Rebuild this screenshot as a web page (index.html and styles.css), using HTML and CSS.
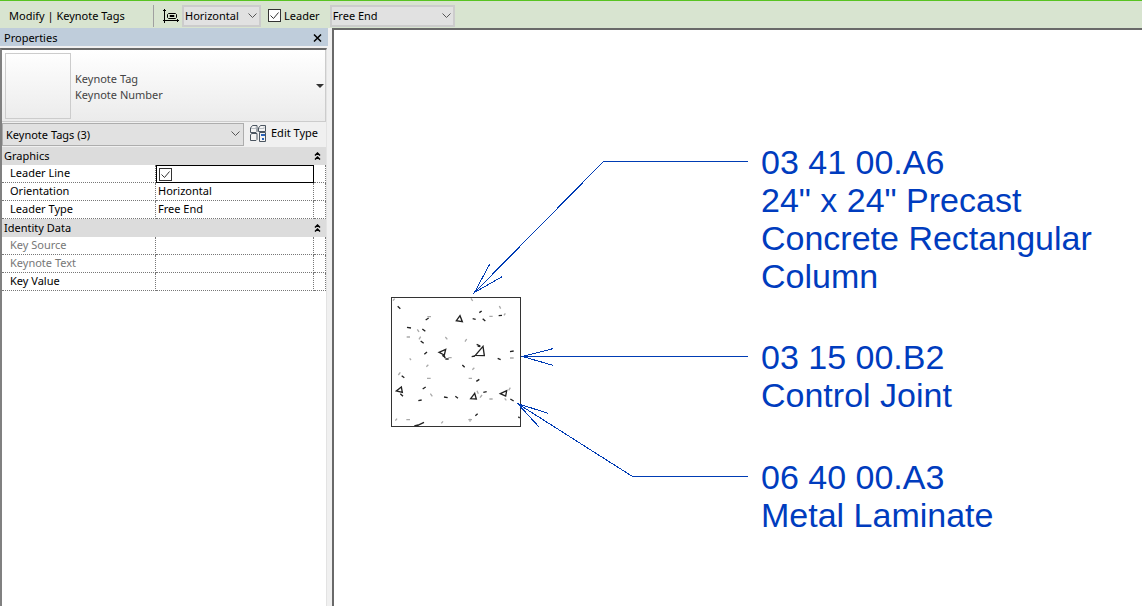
FILE: index.html
```
<!DOCTYPE html>
<html lang="en">
<head>
    <meta charset="UTF-8">
    <meta name="viewport" content="width=device-width, initial-scale=1.0">
    <title>Modify | Keynote Tags</title>
    <link rel="stylesheet" href="styles.css">
</head>
<body>

    <!-- Options Bar -->
    <header class="options-bar">
        <h1 class="mode">Modify | Keynote Tags</h1>
        <div class="options">
            <svg class="tag-icon" width="16" height="14" viewBox="0 0 16 14" aria-hidden="true">
                <path d="M1.5 0v14M0 11.500h16M0 1.500h3M14.500 10v3" />
                <path d="M5.500 4.500h7l1 1v3l-1 1h-7l-1-1v-3zM7 6.500h4v1H7z" />
            </svg>
            <div class="select-box orientation">
                <select aria-label="Orientation">
                    <option>Horizontal</option>
                    <option>Vertical</option>
                </select>
                <svg class="arrow" width="9" height="6" viewBox="0 0 9 6" aria-hidden="true"><path d="M0.500 0.500l4 4 4-4" /></svg>
            </div>
            <div class="check">
                <input type="checkbox" id="leader" checked>
                <svg width="9" height="8" viewBox="0 0 9 8" aria-hidden="true"><path d="M0.500 3.500l3 3 5-6" /></svg>
            </div>
            <label for="leader">Leader</label>
            <div class="select-box leader-end">
                <select aria-label="Leader end">
                    <option>Free End</option>
                    <option>Attached End</option>
                </select>
                <svg class="arrow" width="9" height="6" viewBox="0 0 9 6" aria-hidden="true"><path d="M0.500 0.500l4 4 4-4" /></svg>
            </div>
        </div>
    </header>

    <main class="workspace">

        <!-- Properties Palette -->
        <aside class="palette">
            <div class="palette-title">
                <h2>Properties</h2>
                <button type="button" aria-label="Close">
                    <svg width="9" height="8" viewBox="0 0 9 8"><path d="M1 0.500l7 7M8 0.500l-7 7" /></svg>
                </button>
            </div>

            <div class="palette-body">
                <button type="button" class="type-selector">
                    <span class="preview"></span>
                    <span class="type-name">Keynote Tag<br>Keynote Number</span>
                    <svg width="8" height="4" viewBox="0 0 8 4" aria-hidden="true"><path d="M0 0h8l-4 4z" /></svg>
                </button>

                <div class="filter">
                    <div class="select-box category">
                        <select aria-label="Category">
                            <option>Keynote Tags (3)</option>
                        </select>
                        <svg class="arrow" width="9" height="6" viewBox="0 0 9 6" aria-hidden="true"><path d="M0.500 0.500l4 4 4-4" /></svg>
                    </div>
                    <button type="button" class="edit-type">
                        <svg width="17" height="17" viewBox="0 0 17 17" aria-hidden="true">
                            <path class="tile" d="M0.500 3l2-2.500h4.500v6l-1 1h-5.500zM8.500 3l2-2.500h5v6h-7zM0.500 10l1-1.500h5.500v6l-1 1h-5.500z" />
                            <path class="shade" d="M1 3.500h5v-2M9 3.500h5v-2" />
                            <path class="tile" d="M9.500 7.500h6v9h-6z" />
                            <path class="blue" d="M11 9h4v2h-4zM12 13h2v2h-2z" />
                        </svg>
                        Edit Type
                    </button>
                </div>

                <table class="properties">
                    <colgroup>
                        <col class="col-name">
                        <col>
                        <col class="col-link">
                    </colgroup>
                    <tbody>
                        <tr class="group">
                            <th colspan="2">Graphics</th>
                            <th><button type="button" aria-label="Collapse Graphics"><svg width="7" height="8" viewBox="0 0 7 8"><path d="M1 3.500l2.500-2.500 2.500 2.500M1 7.500l2.500-2.500 2.500 2.500" /></svg></button></th>
                        </tr>
                        <tr>
                            <td><label for="leader-line">Leader Line</label></td>
                            <td class="active">
                                <div class="check">
                                    <input type="checkbox" id="leader-line" checked>
                                    <svg width="9" height="8" viewBox="0 0 9 8" aria-hidden="true"><path d="M0.500 3.500l3 3 5-6" /></svg>
                                </div>
                            </td>
                            <td></td>
                        </tr>
                        <tr>
                            <td>Orientation</td>
                            <td>Horizontal</td>
                            <td></td>
                        </tr>
                        <tr>
                            <td>Leader Type</td>
                            <td>Free End</td>
                            <td></td>
                        </tr>
                    </tbody>
                    <tbody>
                        <tr class="group">
                            <th colspan="2">Identity Data</th>
                            <th><button type="button" aria-label="Collapse Identity Data"><svg width="7" height="8" viewBox="0 0 7 8"><path d="M1 3.500l2.500-2.500 2.500 2.500M1 7.500l2.500-2.500 2.500 2.500" /></svg></button></th>
                        </tr>
                        <tr class="readonly">
                            <td>Key Source</td>
                            <td></td>
                            <td></td>
                        </tr>
                        <tr class="readonly">
                            <td>Keynote Text</td>
                            <td></td>
                            <td></td>
                        </tr>
                        <tr>
                            <td>Key Value</td>
                            <td></td>
                            <td></td>
                        </tr>
                    </tbody>
                </table>
            </div>
        </aside>

        <!-- Drawing Area -->
        <section class="drawing">
            <svg class="geometry" width="420" height="460" viewBox="0 0 420 460" aria-hidden="true">
                <!-- Concrete column -->
                <svg x="51" y="260" width="142" height="141" viewBox="0 0 426 423">
                    <path class="grit light" d="M24 32l5-6M258 25l5 8M127 80h11M65 141h10M97 118l5 8M102 148l5-8M181 141l6 7M240 155l5-8M313 79h10M343 48l4 8M357 76l4-6M375 204h11M190 203h10M74 205l4 5M124 230l6-6M126 265h11M40 255l6-8M136 311l6 8M251 265h10M262 239l6-6M276 302l4 9M285 323l6-8M313 327h10M371 301l5-8M359 325l5 6M169 400l5-6M31 392l5-6M64 389h11M250 389h11M255 386v9" />
                    <path class="grit" d="M38 49l8 7M122 90l9-6M66 112l12 2M112 117l9 7M107 153l9 7M118 193l8-7M283 68l7-5M263 86l9 2M293 86l8 7M341 77l10-1M375 185l11-2M275 163l11 5M260 200l10-2M338 205l9 4M172 196l8 5M181 207h10M232 225l7 7M50 257l8 6M113 297l9-6M274 274l9-6M100 332l10-2M177 321l11 2M211 319l8 6M271 377l7-6M376 327l10 6M295 307l10-2M400 380l4 4M46 311l8 8M88 408l15-4 14-7M92 408l10 1" />
                    <path class="stone" d="M225 77l-11 15 18 3zM162 187l20-9-4 17zM175 196l6 8M294 169l-23 27 27 1zM278 168l8 2M49 291l-15 12 18 4zM269 310l-12 16 17 1zM346 311l19-9-3 16z" />
                    <path class="column" d="M19 23h387v387H19z" />
                </svg>
                <!-- Leaders -->
                <path class="leader-line" d="M414 131.500H269.500L140.500 262.500M155.500 234.500l-15 28 28-16" />
                <path class="leader-line" d="M414 326.500H188.500M219.500 318.500l-31 8 31 9" />
                <path class="leader-line" d="M414 446.500H298.500L183.500 373.500M214.500 383.500l-31-10 22 24" />
            </svg>
            <p class="keynote precast">03 41 00.A6<br>24" x 24" Precast<br>Concrete Rectangular<br>Column</p>
            <p class="keynote joint">03 15 00.B2<br>Control Joint</p>
            <p class="keynote laminate">06 40 00.A3<br>Metal Laminate</p>
        </section>
    </main>

</body>
</html>
```

FILE: styles.css
```
* {
    margin: 0;
    padding: 0;
    box-sizing: border-box;
}

body {
    display: flex;
    flex-direction: column;
    min-height: 100vh;
    font-family: "Noto Sans", "Open Sans", sans-serif;
    font-size: 11px;
    line-height: 16px;
    color: #000;
    background-color: #f0f0f0;
}

h1,
h2 {
    font-size: inherit;
    font-weight: normal;
}

button,
select {
    font: inherit;
    color: inherit;
    border: none;
    background: none;
}

svg {
    display: block;
    fill: none;
    stroke: #000;
}

/* Options Bar */
.options-bar {
    display: flex;
    align-items: center;
    height: 28px;
    padding-top: 2px;
    border-top: 1px solid #58c322;
    background-color: #d8e4d0;
}

.mode {
    width: 154px;
    padding: 3px 0 3px 9px;
    border-right: 1px solid #a0a0a0;
}

.options {
    display: flex;
    align-items: center;
    padding-left: 9px;
}

.tag-icon {
    margin-right: 3px;
}

.select-box {
    position: relative;
    display: flex;
}

.select-box select {
    width: 100%;
    height: 22px;
    padding-left: 1px;
    border: 2px solid #cccccc;
    background-color: #e1e1e1;
    appearance: none;
}

.arrow {
    position: absolute;
    top: 8px;
    right: 4px;
    stroke: #555;
    pointer-events: none;
}

.orientation {
    width: 79px;
    margin-right: 7px;
}

.leader-end {
    width: 125px;
    margin-left: 10px;
}

.check {
    position: relative;
    width: 13px;
    height: 13px;
}

.check input {
    display: block;
    width: 13px;
    height: 13px;
    border: 1px solid #333;
    background-color: #fff;
    appearance: none;
}

.check svg {
    position: absolute;
    top: 3px;
    left: 2px;
    stroke: #333;
    pointer-events: none;
}

.options label {
    padding-left: 3px;
}

/* Workspace */
.workspace {
    display: flex;
    flex: 1;
}

/* Properties Palette */
.palette {
    display: flex;
    flex-direction: column;
    width: 328px;
    flex-shrink: 0;
}

.palette-title {
    display: flex;
    justify-content: space-between;
    align-items: center;
    height: 18px;
    margin-bottom: 2px;
    padding: 2px 6px 0 4px;
    background-color: #bfcddb;
}

.palette-title svg {
    stroke-width: 1.5;
}

.palette-body {
    flex: 1;
    margin-right: 1px;
    border-top: 2px solid #696969;
    border-left: 2px solid #808080;
    border-right: 1px solid #e3e3e3;
    background-color: #fff;
}

.type-selector {
    display: flex;
    align-items: center;
    width: 100%;
    height: 72px;
    padding: 0 1px 0 3px;
    color: #444;
    text-align: left;
    border-right: 1px solid #ccc;
    border-bottom: 1px solid #ccc;
    background-image: linear-gradient(#fff, #ebebeb);
}

.preview {
    width: 66px;
    height: 66px;
    border: 1px solid #ccc;
}

.type-name {
    flex: 1;
    padding: 2px 0 0 4px;
}

.type-selector svg {
    fill: #333;
    stroke: none;
}

.filter {
    display: flex;
    align-items: center;
    height: 25px;
    background-color: #f0f0f0;
}

.category {
    width: 242px;
}

.category select {
    height: 23px;
    border: 1px solid #adadad;
    padding-left: 3px;
}

.edit-type {
    display: flex;
    align-items: center;
    gap: 4px;
    padding: 0 0 3px 6px;
}

.tile {
    fill: #f4f4f4;
    stroke: #4b5560;
}

.shade {
    stroke: #b9bec4;
}

.blue {
    fill: #2a62b8;
    stroke: none;
}

/* Property Grid */
.properties {
    width: 100%;
    table-layout: fixed;
    border-collapse: separate;
    border-spacing: 0;
}

.col-name {
    width: 154px;
}

.col-link {
    width: 12px;
}

.properties tr {
    height: 18px;
}

.properties td {
    height: 18px;
    padding-left: 2px;
    vertical-align: top;
    border-right: 1px dotted #777;
    border-bottom: 1px dotted #777;
}

.properties td:first-child {
    padding-left: 8px;
}

.properties td:last-child {
    padding: 0;
}

.properties th {
    height: 18px;
    padding-left: 2px;
    font-weight: normal;
    text-align: left;
    background-color: #dcdcdc;
}

.properties th:last-child {
    padding: 0;
}

.properties th button {
    display: block;
}

.properties th svg {
    stroke-width: 1.5;
}

.readonly {
    color: #777;
}

.properties .active {
    padding: 3px 0 0 3px;
    outline: 1px solid #000;
    outline-offset: -1px;
}

/* Drawing Area */
.drawing {
    position: relative;
    flex: 1;
    margin-left: 4px;
    border-top: 2px solid #696969;
    border-left: 2px solid #696969;
    background-color: #fff;
}

.geometry {
    shape-rendering: crispEdges;
}

.grit {
    stroke: #222;
    stroke-width: 4;
    shape-rendering: auto;
}

.light {
    stroke: #aaa;
}

.stone {
    stroke: #222;
    stroke-width: 4;
    shape-rendering: auto;
}

.column {
    stroke: #333;
    stroke-width: 3;
}

.leader-line {
    stroke: #003cb4;
}

.keynote {
    position: absolute;
    left: 427px;
    font-family: "Liberation Sans", Arial, sans-serif;
    font-size: 34px;
    line-height: 38px;
    color: #003cbe;
    white-space: nowrap;
}

.precast {
    top: 113px;
}

.joint {
    top: 308px;
}

.laminate {
    top: 428px;
}
```
